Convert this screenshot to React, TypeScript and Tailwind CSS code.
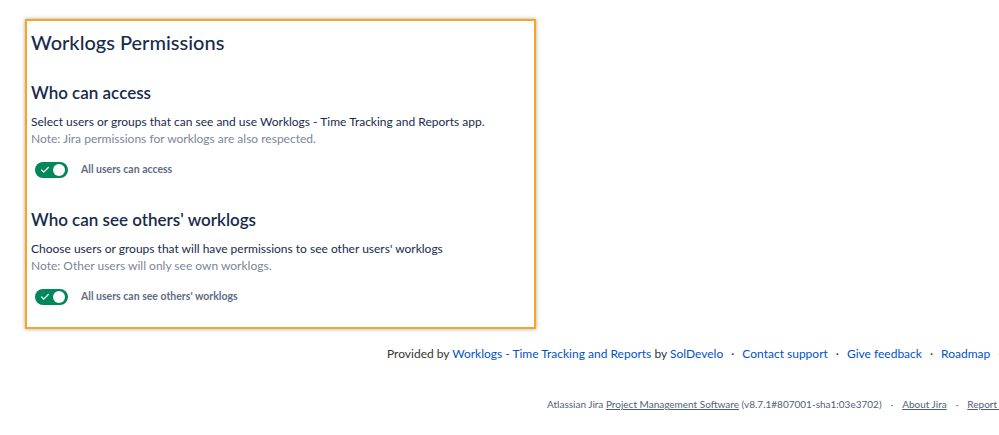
import { Check } from 'lucide-react';

const Toggle = ({ label }: { label: string }) => (
  <div className="flex items-center gap-[13px]">
    <div className="flex h-[16px] w-[33px] items-center justify-between rounded-full bg-[#00875a] px-[3px]">
      <Check className="ml-[2px] h-[10px] w-[10px] text-white" strokeWidth={3} />
      <div className="h-[12px] w-[12px] rounded-full bg-white" />
    </div>
    <span className="text-[10.5px] font-bold text-[#5e6c84]">{label}</span>
  </div>
);

const Section = ({
  title,
  desc,
  note,
  toggle,
}: {
  title: string;
  desc: string;
  note: string;
  toggle: string;
}) => (
  <div className="flex flex-col">
    <h2 className="text-[17px] font-semibold leading-[22px] text-[#172b4d]">{title}</h2>
    <p className="mt-[9px] text-[12px] leading-[17px] text-[#172b4d]">{desc}</p>
    <p className="text-[12px] leading-[17px] text-[#7a869a]">{note}</p>
    <div className="mt-[15px] pl-[4px]">
      <Toggle label={toggle} />
    </div>
  </div>
);

export default function App() {
  return (
    <div
      className="h-[435px] w-[999px] overflow-hidden bg-white"
      style={{ fontFamily: 'Lato, "Liberation Sans", Arial, sans-serif' }}
    >
      <div className="ml-[25px] mt-[19px] h-[310px] w-[511px] border-2 border-[#f5a623] bg-white px-[4px] py-[8px] shadow-[0_0_4px_rgba(0,0,0,0.35)]">
        <h1 className="text-[20px] font-medium leading-[27px] text-[#172b4d]">Worklogs Permissions</h1>
        <div className="mt-[26px] flex flex-col gap-[31px]">
          <Section
            title="Who can access"
            desc="Select users or groups that can see and use Worklogs - Time Tracking and Reports app."
            note="Note: Jira permissions for worklogs are also respected."
            toggle="All users can access"
          />
          <Section
            title="Who can see others' worklogs"
            desc="Choose users or groups that will have permissions to see other users' worklogs"
            note="Note: Other users will only see own worklogs."
            toggle="All users can see others' worklogs"
          />
        </div>
      </div>
      <div className="mt-[16px] flex gap-[8px] whitespace-nowrap pl-[387px] text-[12px] text-[#333]">
        <span>
          Provided by <a className="text-[#0052cc]">Worklogs - Time Tracking and Reports</a> by{' '}
          <a className="text-[#0052cc]">SolDevelo</a>
        </span>
        <span>·</span>
        <a className="text-[#0052cc]">Contact support</a>
        <span>·</span>
        <a className="text-[#0052cc]">Give feedback</a>
        <span>·</span>
        <a className="text-[#0052cc]">Roadmap</a>
        <span>·</span>
      </div>
      <div className="mt-[34px] flex gap-[9px] whitespace-nowrap pl-[547px] text-[10px] text-[#505f79]">
        <span>
          Atlassian Jira <a className="underline">Project Management Software</a> (v8.7.1#807001-sha1:03e3702)
        </span>
        <span>·</span>
        <a className="underline">About Jira</a>
        <span>·</span>
        <a className="underline">Report a problem</a>
      </div>
    </div>
  );
}
